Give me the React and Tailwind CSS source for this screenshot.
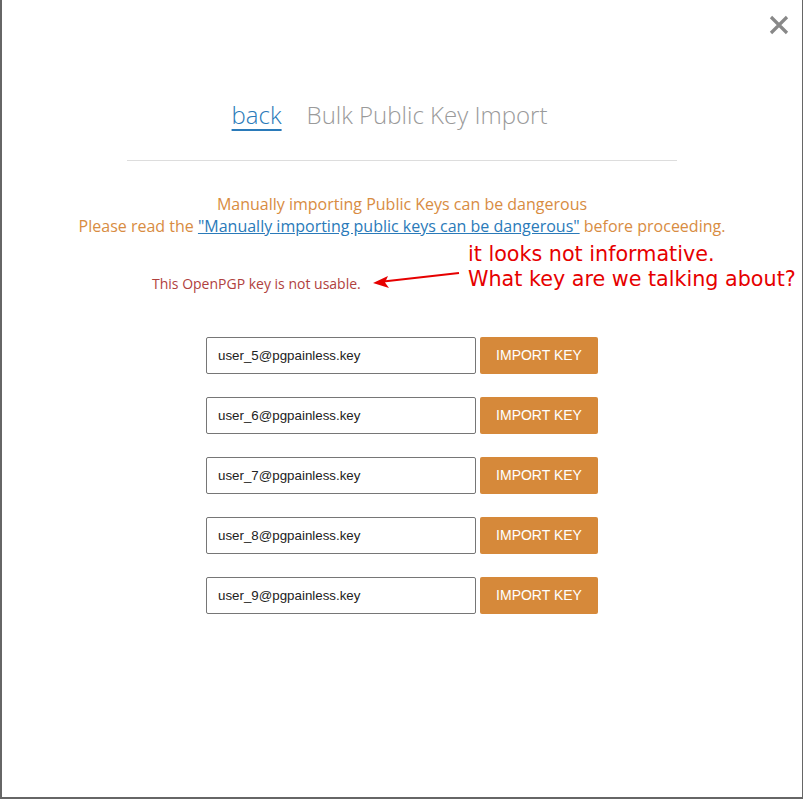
import { X } from 'lucide-react'

const KEYS = [5, 6, 7, 8, 9].map((n) => `user_${n}@pgpainless.key`)

function KeyRow({ email }) {
  return (
    <div className="flex gap-[4px]">
      <input
        readOnly
        value={email}
        className="w-[270px] h-[37px] border border-[#767676] rounded-[2px] pl-[11px] text-[13.33px] text-[#222] font-['Liberation_Sans',Arial,sans-serif] outline-none"
      />
      <button className="w-[118px] h-[37px] bg-[#d6893a] rounded-[2px] text-white text-[14px] font-['Liberation_Sans',Arial,sans-serif]">
        IMPORT KEY
      </button>
    </div>
  )
}

export default function App() {
  return (
    <div className="w-[803px] h-[799px] bg-[#666] pl-[2px] pr-[1px] pb-[2px]">
      <div className="relative w-full h-full bg-white flex flex-col items-center font-['Open_Sans',sans-serif]">
        {/* close */}
        <button className="absolute top-[14px] right-[12px] text-[#888]">
          <svg width="22" height="22" viewBox="0 0 22 22">
            <path d="M3 3 L19 19 M19 3 L3 19" stroke="currentColor" strokeWidth="3.2" strokeLinecap="butt" />
          </svg>
        </button>

        {/* title */}
        <div className="mt-[99px] flex gap-[25px] pr-[25px] text-[24px] leading-[32px] font-light">
          <a className="text-[#2a7ab9] underline decoration-[2px] underline-offset-[5px]">back</a>
          <span className="text-[#9a9a9a]">Bulk Public Key Import</span>
        </div>

        <div className="mt-[29px] w-[550px] border-t border-[#ddd]" />

        {/* warning */}
        <div className="mt-[32px] text-center text-[16px] leading-[22px] text-[#d88c42]">
          <p>Manually importing Public Keys can be dangerous</p>
          <p>
            Please read the{' '}
            <a className="text-[#2a7ab9] underline">"Manually importing public keys can be dangerous"</a>{' '}
            before proceeding.
          </p>
        </div>

        <p className="mt-[37px] w-full pl-[150px] text-[14px] leading-[20px] text-[#b0413e]">
          This OpenPGP key is not usable.
        </p>

        <div className="mt-[43px] flex flex-col gap-[23px]">
          {KEYS.map((k) => (
            <KeyRow key={k} email={k} />
          ))}
        </div>

        {/* annotation overlay */}
        <div className="absolute left-[466px] top-[242px] text-[20.7px] leading-[25px] text-[#e60000] font-['DejaVu_Sans',sans-serif] whitespace-nowrap">
          <p>it looks not informative.</p>
          <p>What key are we talking about?</p>
        </div>
        <svg className="absolute left-[367px] top-[268px]" width="95" height="22" viewBox="0 0 95 22">
          <line x1="90" y1="5" x2="10" y2="14" stroke="#e60000" strokeWidth="2" />
          <path d="M4 15 L19 8 L16 14.5 L20 20 Z" fill="#e60000" />
        </svg>
      </div>
    </div>
  )
}
